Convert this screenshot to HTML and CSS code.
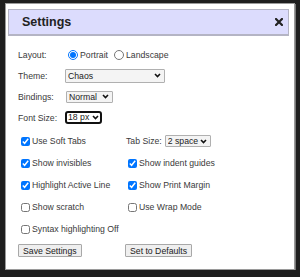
FILE: index.html
```html
<!DOCTYPE html>
<html lang="en">
<head>
    <meta charset="UTF-8">
    <meta name="viewport" content="width=device-width, initial-scale=1.0">
    <title>Settings</title>
    <link rel="stylesheet" href="styles.css">
</head>
<body>
    <div class="panel">
        <div class="panel-header">
            <h1>Settings</h1>
            <span class="close">
                <svg width="8" height="8" viewBox="0 0 8 8"><path d="M1 1L7 7M7 1L1 7" stroke="#222" stroke-width="2.2" stroke-linecap="square"/></svg>
            </span>
        </div>

        <div class="panel-body">
            <div class="row">
                <span class="label">Layout:</span>
                <label class="radio"><input type="radio" name="layout" checked>Portrait</label>
                <label class="radio"><input type="radio" name="layout">Landscape</label>
            </div>
            <div class="row">
                <span class="label">Theme:</span>
                <select class="select theme-select"><option>Chaos</option></select>
            </div>
            <div class="row">
                <span class="label">Bindings:</span>
                <select class="select bindings-select"><option>Normal</option></select>
            </div>
            <div class="row">
                <span class="label">Font Size:</span>
                <select class="select size-select"><option>18 px</option></select>
            </div>

            <div class="options">
                <label class="check"><input type="checkbox" checked>Use Soft Tabs</label>
                <div class="tab-size">
                    <span>Tab Size:</span>
                    <select class="select tab-select"><option>2 space</option></select>
                </div>
                <label class="check"><input type="checkbox" checked>Show invisibles</label>
                <label class="check"><input type="checkbox" checked>Show indent guides</label>
                <label class="check"><input type="checkbox" checked>Highlight Active Line</label>
                <label class="check"><input type="checkbox" checked>Show Print Margin</label>
                <label class="check"><input type="checkbox">Show scratch</label>
                <label class="check"><input type="checkbox">Use Wrap Mode</label>
                <label class="check full"><input type="checkbox">Syntax highlighting Off</label>
                <div><button class="btn">Save Settings</button></div>
                <div><button class="btn">Set to Defaults</button></div>
            </div>
        </div>
    </div>
</body>
</html>
```

FILE: styles.css
```css
* {
    box-sizing: border-box;
}

body {
    margin: 0;
    background: #1e1e1e;
    font-family: 'Liberation Sans', Arial, sans-serif;
    font-size: 8.7px;
    color: #3a3a3a;
}

.panel {
    margin: 3px 0 0 5px;
    width: 290px;
    height: 267px;
    background: #fff;
    border: 1px solid #9a9a9a;
    box-shadow: 1px 1px 0 #777;
}

.panel-header {
    margin: 5px 5px 0 2px;
    height: 27px;
    background: #dcdcfd;
    border: 1px solid #b4b4c4;
    border-bottom-width: 2px;
    display: flex;
    align-items: center;
    justify-content: space-between;
    padding: 0 5px 0 13px;
}

.panel-header h1 {
    margin: 0;
    font-size: 12.5px;
    font-weight: bold;
    color: #222;
}

.close {
    display: flex;
}

.panel-body {
    padding: 8px 0 0 12px;
}

.row {
    height: 21px;
    display: flex;
    align-items: center;
}

.label {
    width: 47px;
}

.radio {
    display: flex;
    align-items: center;
    margin-right: 3px;
}

.radio input {
    width: 10px;
    height: 10px;
    margin: 0 2px 0 3px;
}

.select {
    appearance: none;
    font-family: inherit;
    font-size: 8.7px;
    line-height: 10px;
    color: #222;
    height: 12px;
    padding: 0 10px 0 2px;
    background: #f4f4f4 url("data:image/svg+xml,%3Csvg xmlns='http://www.w3.org/2000/svg' width='7' height='5' viewBox='0 0 7 5'%3E%3Cpath d='M1 1L3.5 3.5L6 1' fill='none' stroke='%23111' stroke-width='1.6'/%3E%3C/svg%3E") no-repeat right 3px center;
    border: 1px solid #b0b0b0;
    border-radius: 1px;
}

.theme-select {
    width: 100px;
    height: 14px;
}

.bindings-select {
    width: 47px;
    margin-left: 1px;
}

.size-select {
    width: 37px;
    height: 13px;
    line-height: 9px;
    padding-left: 1px;
    border: 2px solid #111;
    border-radius: 3px;
    background-color: #fff;
    background-position: right 1px center;
}

.tab-select {
    width: 46px;
    margin-left: 3px;
}

.options {
    display: grid;
    grid-template-columns: 107px 1fr;
    grid-auto-rows: 22px;
    margin-top: 2px;
}

.check {
    display: flex;
    align-items: center;
}

.check input {
    width: 9px;
    height: 9px;
    margin: 0 2px 0 3px;
}

.full {
    grid-column: 1 / 3;
}

.tab-size {
    display: flex;
    align-items: center;
    margin-left: 1px;
}

.btn {
    font-family: inherit;
    font-size: 8.7px;
    color: #222;
    height: 13px;
    padding: 0 4px;
    margin-top: 4px;
    background: #efefef;
    border: 1px solid #a8a8a8;
    border-radius: 1px;
}
```
